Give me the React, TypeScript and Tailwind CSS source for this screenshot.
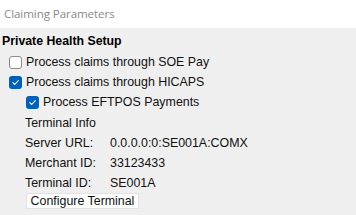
import React from "react";

function Box({ checked }: { checked: boolean }) {
  if (checked) {
    return (
      <span className="flex h-[13px] w-[13px] shrink-0 items-center justify-center rounded-[3px] bg-[#005fb8]">
        <svg width="9" height="9" viewBox="0 0 9 9" fill="none">
          <path d="M1.8 4.7 L3.7 6.5 L7.3 2.6" stroke="white" strokeWidth="1.1" strokeLinecap="round" strokeLinejoin="round" />
        </svg>
      </span>
    );
  }
  return <span className="h-[13px] w-[13px] shrink-0 rounded-[3px] border border-[#8a8a8a] bg-white" />;
}

export default function App() {
  return (
    <div className="flex h-[215px] w-[356px] flex-col bg-[#efefef] text-[12.4px] text-[#111]" style={{ fontFamily: '"Liberation Sans", Arial, sans-serif' }}>
      <div className="flex h-[28px] items-center bg-white pl-[4px] text-[11.6px] tracking-[-0.1px] text-[#8a8a8a]" style={{ fontFamily: '"Open Sans", sans-serif' }}>
        Claiming Parameters
      </div>
      <div className="flex flex-col pl-[2px] pt-[5px]">
        <div className="flex h-[17px] items-center text-[12.3px] font-bold text-black">Private Health Setup</div>
        <div className="mt-[2px] flex h-[20px] items-center gap-[4px] pl-[7px]">
          <Box checked={false} />
          <span>Process claims through SOE Pay</span>
        </div>
        <div className="flex h-[20px] items-center gap-[4px] pl-[7px]">
          <Box checked />
          <span>Process claims through HICAPS</span>
        </div>
        <div className="flex h-[20px] items-center gap-[4px] pl-[24px]">
          <Box checked />
          <span>Process EFTPOS Payments</span>
        </div>
        <div className="mt-[1px] flex flex-col pl-[23px]">
          <div className="flex h-[20px] items-center">Terminal Info</div>
          <div className="flex h-[20px] items-center">
            <span className="w-[85px]">Server URL:</span>
            <span>0.0.0.0:0:SE001A:COMX</span>
          </div>
          <div className="flex h-[20px] items-center">
            <span className="w-[85px]">Merchant ID:</span>
            <span>33123433</span>
          </div>
          <div className="flex h-[20px] items-center">
            <span className="w-[85px]">Terminal ID:</span>
            <span>SE001A</span>
          </div>
          <div className="flex pl-[1px]">
            <button className="h-[16px] w-[113px] border border-[#e2e2e2] bg-white text-[12.4px] leading-none text-[#111]">Configure Terminal</button>
          </div>
        </div>
      </div>
    </div>
  );
}
